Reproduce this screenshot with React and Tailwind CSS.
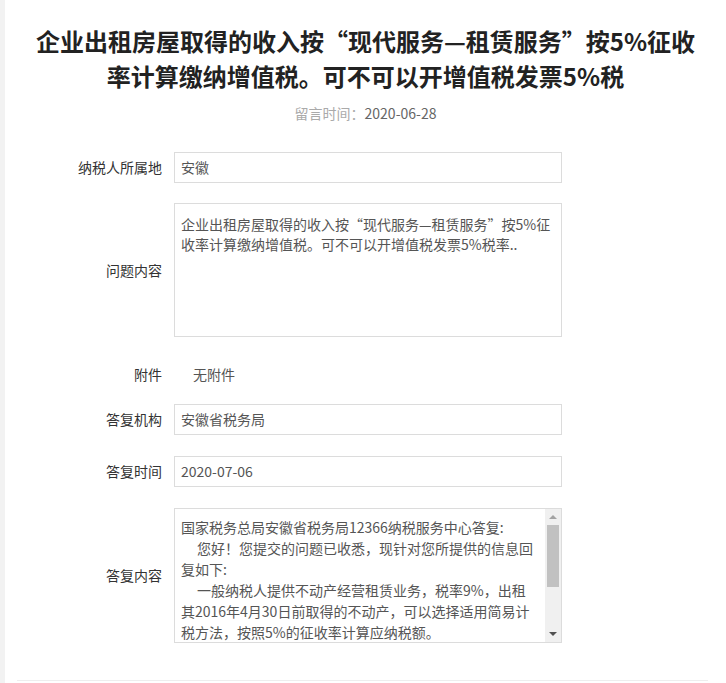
const font = { fontFamily: '"Noto Sans CJK SC", "Noto Sans", sans-serif' };

function Row({ label, children, className = '' }) {
  return (
    <div className={`flex items-center ${className}`}>
      <div className="w-[169px] shrink-0 pr-[12px] text-right text-[14px] text-[#333]">{label}</div>
      {children}
    </div>
  );
}

function Field({ value }) {
  return (
    <div className="w-[388px] h-[31px] border border-[#dcdcdc] px-[6px] flex items-center text-[14px] text-[#555]">
      {value}
    </div>
  );
}

const answer = [
  { text: '国家税务总局安徽省税务局12366纳税服务中心答复:' },
  { text: '您好！您提交的问题已收悉，现针对您所提供的信息回', indent: true },
  { text: '复如下:' },
  { text: '一般纳税人提供不动产经营租赁业务，税率9%，出租', indent: true },
  { text: '其2016年4月30日前取得的不动产，可以选择适用简易计' },
  { text: '税方法，按照5%的征收率计算应纳税额。' },
];

export default function App() {
  return (
    <div className="w-[726px] h-[683px] bg-white border-l-[5px] border-[#f2f2f2] overflow-hidden" style={font}>
      {/* 标题 */}
      <div className="pt-[23px] text-center text-[24px] leading-[35px] font-bold text-[#222]">
        企业出租房屋取得的收入按“现代服务—租赁服务”按5%征收
        <br />
        率计算缴纳增值税。可不可以开增值税发票5%税
      </div>
      <div className="mt-[10px] text-center text-[14px] leading-[20px]">
        <span className="text-[#aaa]">留言时间：</span>
        <span className="text-[#666]">2020-06-28</span>
      </div>

      {/* 表单 */}
      <div className="mt-[29px]">
        <Row label="纳税人所属地">
          <Field value="安徽" />
        </Row>

        <Row label="问题内容" className="mt-[20px]">
          <div className="w-[388px] h-[134px] border border-[#dcdcdc] px-[6px] pt-[10px] text-[14px] leading-[20px] text-[#555]">
            <div className="whitespace-nowrap">企业出租房屋取得的收入按“现代服务—租赁服务”按5%征</div>
            <div className="whitespace-nowrap">收率计算缴纳增值税。可不可以开增值税发票5%税率..</div>
          </div>
        </Row>

        <Row label="附件" className="mt-[22px] h-[30px]">
          <div className="pl-[19px] text-[14px] text-[#555]">无附件</div>
        </Row>

        <Row label="答复机构" className="mt-[15px]">
          <Field value="安徽省税务局" />
        </Row>

        <Row label="答复时间" className="mt-[21px]">
          <Field value="2020-07-06" />
        </Row>

        <Row label="答复内容" className="mt-[21px]">
          <div className="w-[388px] h-[135px] border border-[#dcdcdc] flex">
            <div className="flex-1 pl-[6px] pt-[8px] text-[14px] leading-[21px] text-[#555] overflow-hidden">
              {answer.map((line, i) => (
                <div key={i} className={`whitespace-nowrap ${line.indent ? 'pl-[16px]' : ''}`}>
                  {line.text}
                </div>
              ))}
            </div>
            {/* 滚动条 */}
            <div className="w-[16px] bg-[#f0f0f0] flex flex-col items-center">
              <div className="h-[16px] flex items-center justify-center">
                <div className="w-0 h-0 border-l-[4px] border-r-[4px] border-b-[4px] border-l-transparent border-r-transparent border-b-[#a3a3a3]" />
              </div>
              <div className="w-[12px] h-[62px] bg-[#c1c1c1]" />
              <div className="flex-1" />
              <div className="h-[16px] flex items-center justify-center">
                <div className="w-0 h-0 border-l-[4px] border-r-[4px] border-t-[4px] border-l-transparent border-r-transparent border-t-[#505050]" />
              </div>
            </div>
          </div>
        </Row>
      </div>

      {/* 底部 */}
      <div className="mt-[37px] ml-[12px] mr-[18px] border-b border-[#eee]" />
    </div>
  );
}
